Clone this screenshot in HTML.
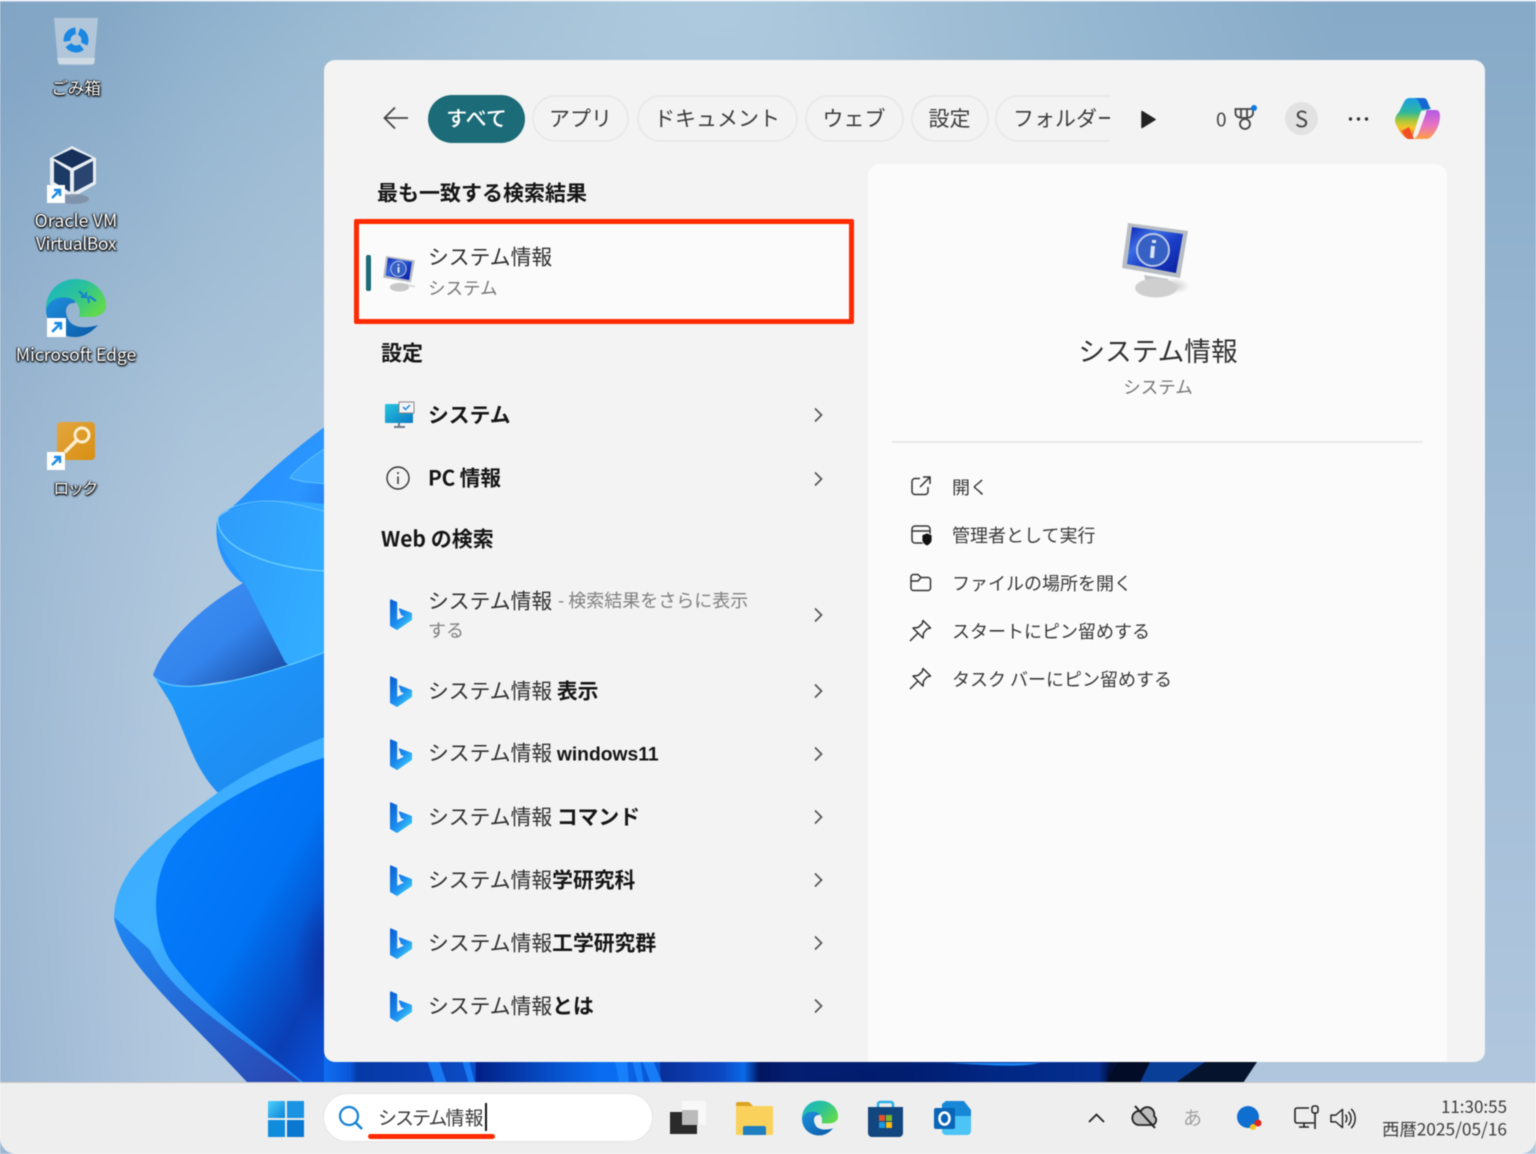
<!DOCTYPE html>
<html lang="ja"><head><meta charset="utf-8"><title>検索</title>
<style>
html,body{margin:0;padding:0;background:#fff}
#r{position:relative;width:1536px;height:1154px;overflow:hidden;filter:blur(.5px);font-family:"Liberation Sans","Noto Sans CJK JP",sans-serif;color:#222}
.a{position:absolute}
.t{position:absolute;white-space:nowrap;transform:translateY(-50%);line-height:1.2;font-family:"Noto Sans CJK JP","Liberation Sans",sans-serif;margin-top:-.5px}
.h{font-size:21px;font-weight:700;color:#151515;margin-top:.5px}
.n{font-size:20.8px;color:#2f2f2f}
.b{font-weight:700;color:#151515}
.s{font-size:17.5px;color:#777}
.c{position:absolute;top:95px;height:47px;box-sizing:border-box;border:2px solid #e9e9e9;border-radius:24px;font:21px/43px "Noto Sans CJK JP",sans-serif;text-align:center;color:#3c3c3c;white-space:nowrap}
.d{font-size:18px;color:#383838;margin-top:.5px}
.l{position:absolute;width:160px;text-align:center;color:#fff;font-size:17.5px;line-height:23px;text-shadow:0 0 2px #000,1px 1px 2px #000,0 1px 1px #000,-1px 0 1px rgba(0,0,0,.8);transform:translateX(-50%);font-family:"Noto Sans CJK JP","Liberation Sans",sans-serif}
svg{position:absolute;overflow:visible}
</style></head><body><div id="r">

<!-- wallpaper -->
<svg style="left:0;top:0" width="1536" height="1154" viewBox="0 0 1536 1154">
<defs>
<linearGradient id="bg" x1="0" y1="0" x2="0" y2="1"><stop offset="0" stop-color="#86aac8"/><stop offset=".45" stop-color="#9fbbd5"/><stop offset="1" stop-color="#b2c8df"/></linearGradient>
<linearGradient id="bg2" x1="0" y1="0" x2="1" y2="0"><stop offset="0" stop-color="#7f9fc2" stop-opacity=".45"/><stop offset=".13" stop-color="#7f9fc2" stop-opacity="0"/></linearGradient>
<radialGradient id="bg3" gradientUnits="userSpaceOnUse" cx="500" cy="620" r="720"><stop offset="0" stop-color="#d8e6ee" stop-opacity=".5"/><stop offset="1" stop-color="#d8e6ee" stop-opacity="0"/></radialGradient>
<radialGradient id="bg4" gradientUnits="userSpaceOnUse" cx="720" cy="-40" r="620"><stop offset="0" stop-color="#c4dcea" stop-opacity=".65"/><stop offset="1" stop-color="#c4dcea" stop-opacity="0"/></radialGradient>
<linearGradient id="p1" x1="0" y1="0" x2="1" y2="1"><stop offset="0" stop-color="#1f8fff"/><stop offset=".5" stop-color="#2c96ff"/><stop offset="1" stop-color="#1459d8"/></linearGradient>
<linearGradient id="p2" x1="0" y1="0" x2="1" y2=".9"><stop offset="0" stop-color="#3f90f5"/><stop offset=".55" stop-color="#3384ec"/><stop offset=".85" stop-color="#1f55b0"/><stop offset="1" stop-color="#1d4fa8"/></linearGradient>
<linearGradient id="p3" x1="0" y1="0" x2="1" y2="1"><stop offset="0" stop-color="#1f9cff"/><stop offset="1" stop-color="#1e86ec"/></linearGradient>
<linearGradient id="p4" x1="0" y1="0" x2="1" y2=".4"><stop offset="0" stop-color="#2e9bfb"/><stop offset="1" stop-color="#33adff"/></linearGradient>
<linearGradient id="p5" x1="0" y1="0" x2=".9" y2="1"><stop offset="0" stop-color="#0a80ff"/><stop offset=".55" stop-color="#0074f4"/><stop offset=".85" stop-color="#0a3eb5"/><stop offset="1" stop-color="#0a50d5"/></linearGradient>
<linearGradient id="p6" x1="0" y1="0" x2="1" y2="1"><stop offset="0" stop-color="#1f88f5"/><stop offset="1" stop-color="#2a45b0"/></linearGradient>
<linearGradient id="p7" x1="0" y1="0" x2=".6" y2="1"><stop offset="0" stop-color="#3aa9ff"/><stop offset=".5" stop-color="#3fb0ff"/><stop offset="1" stop-color="#1f88f5"/></linearGradient>
<radialGradient id="dk" cx=".5" cy=".5" r=".5"><stop offset="0" stop-color="#0a2f9e" stop-opacity=".95"/><stop offset="1" stop-color="#0a2f9e" stop-opacity="0"/></radialGradient>
<linearGradient id="st" gradientUnits="userSpaceOnUse" x1="324" y1="0" x2="1257" y2="0">
<stop offset="0" stop-color="#0f70f0"/>
<stop offset=".028" stop-color="#0a55d8"/>
<stop offset=".036" stop-color="#053aa5"/>
<stop offset=".103" stop-color="#0a3db0"/>
<stop offset=".162" stop-color="#0c4fc8"/>
<stop offset=".163" stop-color="#021f85"/>
<stop offset=".232" stop-color="#0648c0"/>
<stop offset=".296" stop-color="#0a6cf0"/>
<stop offset=".313" stop-color="#0a6cf0"/>
<stop offset=".36" stop-color="#0a4fc8"/>
<stop offset=".361" stop-color="#0a2f98"/>
<stop offset=".424" stop-color="#0d45c0"/>
<stop offset=".45" stop-color="#0a6ae8"/>
<stop offset=".467" stop-color="#02145f"/>
<stop offset=".5" stop-color="#041e70"/>
<stop offset=".62" stop-color="#021f70"/>
<stop offset=".72" stop-color="#0235a0"/>
<stop offset=".83" stop-color="#0a47b8"/>
<stop offset=".84" stop-color="#05103a"/>
<stop offset="1" stop-color="#08182e"/>
</linearGradient>
</defs>
<rect width="1536" height="1154" fill="url(#bg)"/>
<rect width="1536" height="1154" fill="url(#bg2)"/>
<rect width="1536" height="1154" fill="url(#bg3)"/>
<rect width="1536" height="1154" fill="url(#bg4)"/>
<rect width="1536" height="1.5" fill="#e8eef4"/>
<!-- back top petal -->
<path d="M330 423 C295 448 262 478 243 497 L217 521 C212 560 240 582 243 583 L330 670Z" fill="url(#p1)"/>
<path d="M330 445C310 458 295 470 290 478 C305 483 318 483 330 484Z" fill="#3ba6ff" stroke="#5cc0ff" stroke-width="1"/>
<!-- mid petal (behind cone) -->
<path d="M243 583C205 605 165 640 153 675 C165 690 175 690 200 685 L300 670 L300 600Z" fill="url(#p2)"/>
<!-- upper cone -->
<path d="M330 505C290 498 235 500 218 518 C212 535 228 560 243 580 L285 662 L296 672 L330 668Z" fill="url(#p4)"/>
<path d="M218 518C214 545 268 570 330 571" fill="none" stroke="#6fd2ff" stroke-width="1.300"/>
<path d="M218 518C228 503 262 498 290 503 C305 506 320 510 330 513" fill="none" stroke="#62c4ff" stroke-width="1"/>
<path d="M155 678C168 690 195 688 225 682 C260 675 300 665 330 650 L330 800 L220 795 C195 770 190 745 172 705Z" fill="url(#p3)"/>
<path d="M154 677C170 692 210 686 240 679 C275 671 305 660 330 650" fill="none" stroke="#5cc8ff" stroke-width="1.300"/>
<!-- big petal -->
<path d="M330 735C290 750 245 772 205 802 C160 835 115 870 114 917 C120 960 180 1010 247 1082 L330 1082Z" fill="url(#p7)"/>
<path d="M114 917C120 960 180 1010 247 1082 L300 1082 C240 1035 175 1000 150 950 Z" fill="url(#p6)"/>
<path d="M330 756C280 770 215 800 180 838 C150 870 150 925 170 960 C205 1010 260 1045 303 1082 L330 1082Z" fill="url(#p5)"/>
<ellipse cx="330" cy="960" rx="36" ry="70" fill="url(#dk)"/>
<!-- bottom strip -->
<path d="M324 1056H1257L1243 1083H324Z" fill="url(#st)"/>
<path d="M427 1060l8 24h12l-8-24zM462 1060l7 24h6l-6-24zM615 1060l4 24h10l-2-24zM632 1060l6 24h6l-4-24zM642 1060l9 24h12l-10-24z" fill="#1a86ff" opacity=".8"/>
<path d="M800 1083C850 1068 900 1063 960 1064 C1020 1064 1060 1062 1110 1062 L1105 1083Z" fill="#021c6e" opacity=".55"/>
<path d="M950 1063 C1000 1066 1020 1067 1040 1063Z" fill="#1a85f5"/>
<path d="M1118 1062H1150L1138 1083H1106Z" fill="#020c26"/>
<path d="M1150 1062H1205L1175 1083H1140Z" fill="#0a3f98"/>
<path d="M1205 1062H1257L1243 1083H1178Z" fill="#05132c"/>
</svg>

<!-- recycle bin -->
<svg style="left:54px;top:16px" width="44" height="50" viewBox="0 0 44 50">
<path d="M0 2h44l-4 44a3 3 0 0 1-3 3H7a3 3 0 0 1-3-3z" fill="#b9cddc" opacity=".85"/>
<path d="M3 42h38l-1 6H5z" fill="#cfdbe4"/>
<circle cx="22" cy="24" r="9" fill="none" stroke="#1a87e3" stroke-width="7" stroke-dasharray="15 3.850" transform="rotate(-70 22 24)"/>
</svg>
<div class="l" style="left:76px;top:76px;font-size:16.500px">ごみ箱</div>

<!-- VirtualBox -->
<svg style="left:47px;top:146px" width="52" height="60" viewBox="0 0 52 60">
<path d="M25 0L49 12V38L25 52 3 38V12Z" fill="#e8edf2"/>
<path d="M25 3L45 12 25 22 6 12Z" fill="#15305a"/>
<path d="M7 15L23 25V46L7 36Z" fill="#1c3a66"/>
<path d="M27 25L46 15V36L27 46Z" fill="#2a4670"/>
<ellipse cx="27" cy="53" rx="15" ry="5" fill="#7d8ea5" opacity=".85"/>
</svg>
<div class="a" style="left:47px;top:185px;width:18px;height:18px;background:#fff"></div>
<svg style="left:50px;top:188px" width="12" height="12" viewBox="0 0 12 12"><path d="M2 10L9 3M4 2h6v6" stroke="#1a8ae5" stroke-width="2.400" fill="none"/></svg>
<div class="l" style="left:76px;top:209px"><span style="letter-spacing:.2px">Oracle VM</span><br><span style="letter-spacing:-.4px">VirtualBox</span></div>

<!-- Edge desktop -->
<svg style="left:46px;top:279px" width="60" height="58" viewBox="0 0 60 58">
<defs><linearGradient id="e1" x1="0" y1="0" x2="1" y2=".6"><stop offset="0" stop-color="#19b4c9"/><stop offset=".55" stop-color="#2bc29a"/><stop offset="1" stop-color="#5fd94f"/></linearGradient><linearGradient id="e2" x1="0" y1="0" x2="1" y2="1"><stop offset="0" stop-color="#1f8fde"/><stop offset="1" stop-color="#0a5aa6"/></linearGradient></defs>
<path d="M0 30C0 12 13 0 30 0 48 0 60 13 60 26 60 35 52 38 44 38H33C35 30 32 22 24 20 14 18 4 22 0 30Z" fill="url(#e1)"/>
<path d="M0 30C4 20 14 17 23 19 29 21 31 24 28 24 20 24 18 32 22 40 26 49 39 50 52 46 45 54 37 58 29 58 12 58 0 46 0 30Z" fill="url(#e2)"/>
<path d="M33 12l6 6M35 18h5v-5M50 22l-7-5M42 18l1 6" stroke="#157fd2" stroke-width="2" fill="none"/>
</svg>
<div class="a" style="left:47px;top:318px;width:19px;height:19px;background:#fff"></div>
<svg style="left:50px;top:321px" width="13" height="13" viewBox="0 0 12 12"><path d="M2 10L9 3M4 2h6v6" stroke="#1a8ae5" stroke-width="2.400" fill="none"/></svg>
<div class="l" style="left:76px;top:343px">Microsoft Edge</div>

<!-- Lock -->
<svg style="left:57px;top:422px" width="38" height="39" viewBox="0 0 38 39">
<defs><linearGradient id="k1" x1="0" y1="0" x2="1" y2="1"><stop offset="0" stop-color="#e3a640"/><stop offset="1" stop-color="#d98f10"/></linearGradient></defs>
<rect width="38" height="38" rx="4" fill="url(#k1)"/>
<circle cx="25" cy="13" r="7" fill="none" stroke="#fdeed0" stroke-width="3"/>
<path d="M20 18L8 30" stroke="#fdeed0" stroke-width="3.500"/>
</svg>
<div class="a" style="left:47px;top:452px;width:18px;height:18px;background:#fff"></div>
<svg style="left:50px;top:455px" width="12" height="12" viewBox="0 0 12 12"><path d="M2 10L9 3M4 2h6v6" stroke="#1a8ae5" stroke-width="2.400" fill="none"/></svg>
<div class="l" style="left:75px;top:476px;font-size:16px;letter-spacing:-1.500px">ロック</div>

<!-- panel -->
<div class="a" style="left:324px;top:60px;width:1161px;height:1002px;background:#f3f3f3;border-radius:11px"></div>
<div class="a" style="left:868px;top:164px;width:579px;height:898px;background:#fbfbfb;border-radius:12px 12px 0 0"></div>

<!-- top bar -->
<svg style="left:383px;top:106px" width="26" height="24" viewBox="0 0 26 24"><path d="M25 12H2M12 1.500L1.500 12 12 22.500" fill="none" stroke="#444" stroke-width="1.800"/></svg>
<div class="c" style="left:428px;top:94.500px;width:97px;height:48px;background:#1c6b78;border:0;color:#fff;line-height:47px;font-weight:500">すべて</div>
<div class="c" style="left:532px;width:97px">アプリ</div>
<div class="c" style="left:636.500px;width:161px">ドキュメント</div>
<div class="c" style="left:804.500px;width:99px">ウェブ</div>
<div class="c" style="left:910.500px;width:78px">設定</div>
<div class="a" style="left:995px;top:95px;width:115px;height:47px;overflow:hidden"><div class="c" style="left:0;top:0;width:150px;text-align:left;padding-left:16px">フォルダー</div></div>
<svg style="left:1141px;top:110px" width="15" height="19" viewBox="0 0 15 19"><path d="M1 1.500L14 9.500 1 17.500Z" fill="#222" stroke="#222" stroke-linejoin="round" stroke-width="1.500"/></svg>
<div class="t" style="left:1216px;top:120px;font-size:19px;color:#444">0</div>
<svg style="left:1234px;top:105px" width="24" height="26" viewBox="0 0 24 26"><path d="M1.500 4H19V8C19 12 15 13 10 13 5 13 1.500 12 1.500 8ZM7 4V12M13 4V12" fill="none" stroke="#444" stroke-width="1.800"/><circle cx="11" cy="19" r="5" fill="none" stroke="#444" stroke-width="1.800"/><circle cx="20" cy="3" r="3" fill="#0f7ae5"/></svg>
<div class="a" style="left:1285px;top:102px;width:33px;height:33px;border-radius:50%;background:#e2e2e2;font:22px/33px 'Noto Sans CJK JP',sans-serif;text-align:center;color:#444">S</div>
<svg style="left:1348px;top:116px" width="21" height="6" viewBox="0 0 21 6"><circle cx="2.500" cy="3" r="1.700" fill="#333"/><circle cx="10.500" cy="3" r="1.700" fill="#333"/><circle cx="18.500" cy="3" r="1.700" fill="#333"/></svg>
<!-- copilot -->
<svg style="left:1395px;top:97px" width="46" height="44" viewBox="0 0 46 44">
<defs>
<linearGradient id="c1" x1=".4" y1="0" x2=".4" y2="1"><stop offset="0" stop-color="#1b9fe8"/><stop offset=".35" stop-color="#2fb89a"/><stop offset=".55" stop-color="#a8c83a"/><stop offset=".72" stop-color="#f5c62a"/><stop offset="1" stop-color="#f2552a"/></linearGradient>
<linearGradient id="c2" x1=".5" y1="0" x2=".5" y2="1"><stop offset="0" stop-color="#b25ae6"/><stop offset=".55" stop-color="#ea74c0"/><stop offset="1" stop-color="#ffa040"/></linearGradient>
</defs>
<path d="M14 1H28C31 1 32 3 33 6L36 12 26 14 18 38C17 41 15 42 13 42 8 40 1 30 0 24 0 20 2 17 4 15L9 5C10 3 12 1 14 1Z" fill="url(#c1)"/>
<path d="M20 1H28C31 1 32 3 33 6L35 12H27L24 5C23 3 22 2 20 1Z" fill="#1467d4"/>
<path d="M32 13H41C44 13 45 16 45 19 45 26 42 34 36 40 34 42 32 42 30 42H18C21 41 23 38 24 35L31 16C31 15 31 14 32 13Z" fill="url(#c2)"/>
<path d="M14 30L19 42H14C11 42 9 37 7 34Z" fill="#f04e23"/>
</svg>

<!-- left column -->
<div class="t h" style="left:377px;top:192px">最も一致する検索結果</div>
<div class="a" style="left:359px;top:224px;width:491px;height:96px;background:#fbfbfb"></div>
<div class="a" style="left:366px;top:255px;width:5px;height:36px;background:#1c6b78;border-radius:2px"></div>
<svg style="left:383px;top:256px" width="32" height="36" viewBox="0 0 66 75">
<defs><linearGradient id="m1" x1="0" y1="0" x2="1" y2="1"><stop offset="0" stop-color="#0a24b0"/><stop offset=".35" stop-color="#3a6ae0"/><stop offset=".6" stop-color="#1a3ec4"/><stop offset="1" stop-color="#081c9c"/></linearGradient></defs>
<path d="M6 0L66 9 58 55 0 45Z" fill="#b8bcc2"/><path d="M10 4L60 12 54 50 5 41Z" fill="url(#m1)"/>
<circle cx="32" cy="27" r="16" fill="#3660c4" stroke="#b9c6e6" stroke-width="2"/><path d="M32 17v3M32 23v12" stroke="#dbe3f5" stroke-width="4"/>
<ellipse cx="34" cy="65" rx="20" ry="9" fill="#c8c8c8"/><path d="M48 60L66 64" stroke="#bbb" stroke-width="4" opacity=".5"/>
</svg>
<div class="t n" style="left:428px;top:256px">システム情報</div>
<div class="t s" style="left:428px;top:288px">システム</div>
<!-- red box -->
<div class="a" style="left:354px;top:219px;width:500px;height:105px;box-sizing:border-box;border:5px solid #ff2a00;border-radius:2px"></div>

<div class="t h" style="left:381px;top:352px">設定</div>
<svg style="left:385px;top:402px" width="30" height="27" viewBox="0 0 30 27">
<defs><linearGradient id="sy" x1="0" y1="0" x2="1" y2="1"><stop offset="0" stop-color="#27c6e0"/><stop offset="1" stop-color="#0a78c2"/></linearGradient></defs>
<rect x="0" y="2" width="28" height="19" rx="1" fill="url(#sy)"/><rect x="14" y="0" width="15" height="11" fill="#f4f4f4" stroke="#888" stroke-width="1"/><path d="M18 5l2.500 2.500L25 3" stroke="#1a8ae5" stroke-width="1.500" fill="none"/><path d="M9 25h11M14 21v4" stroke="#6b7a88" stroke-width="2"/></svg>
<div class="t n b" style="left:428px;top:414px">システム</div>
<svg style="left:386px;top:466px" width="24" height="24" viewBox="0 0 24 24"><circle cx="12" cy="12" r="11" fill="none" stroke="#333" stroke-width="1.400"/><path d="M12 10.500v7.500" stroke="#333" stroke-width="1.500"/><circle cx="12" cy="7" r="1" fill="#333"/></svg>
<div class="t n b" style="left:428px;top:477px;letter-spacing:-.2px">PC 情報</div>
<div class="t h" style="left:381px;top:538px">Web の検索</div>

<svg width="0" height="0" style="position:absolute"><defs>
<linearGradient id="bi" x1=".1" y1="0" x2=".9" y2="1"><stop offset="0" stop-color="#0b64d4"/><stop offset=".55" stop-color="#1b8cf0"/><stop offset="1" stop-color="#45d6f4"/></linearGradient>
<symbol id="bing" viewBox="0 0 22 31"><path d="M.7 1L6.500 3.500V22L15.500 17.500 11.500 15.500 9.500 10 21.300 14.500V20.500L7 30.300 .7 26.500Z" fill="url(#bi)" stroke="url(#bi)" stroke-width="1.400" stroke-linejoin="round"/></symbol>
<symbol id="chev" viewBox="0 0 10 16"><path d="M2 1.500L8.500 8 2 14.500" fill="none" stroke="#555" stroke-width="1.700"/></symbol>
</defs></svg>

<svg style="left:390px;top:599px" width="22" height="31"><use href="#bing"/></svg>
<div class="t n" style="left:428px;top:600px">システム情報</div>
<div class="t" style="left:558px;top:601.500px;font-size:18px;color:#808080">- 検索結果をさらに表示</div>
<div class="t" style="left:428px;top:631.500px;font-size:18px;color:#808080">する</div>

<svg style="left:390px;top:676px" width="22" height="31"><use href="#bing"/></svg>
<div class="t n" style="left:428px;top:690px">システム情報 <span class="b">表示</span></div>
<svg style="left:390px;top:739px" width="22" height="31"><use href="#bing"/></svg>
<div class="t n" style="left:428px;top:753px">システム情報 <span class="b" style="font:700 19.300px 'Liberation Sans',sans-serif">windows11</span></div>
<svg style="left:390px;top:802px" width="22" height="31"><use href="#bing"/></svg>
<div class="t n" style="left:428px;top:816px">システム情報 <span class="b">コマンド</span></div>
<svg style="left:390px;top:865px" width="22" height="31"><use href="#bing"/></svg>
<div class="t n" style="left:428px;top:879px">システム情報<span class="b">学研究科</span></div>
<svg style="left:390px;top:928px" width="22" height="31"><use href="#bing"/></svg>
<div class="t n" style="left:428px;top:942px">システム情報<span class="b">工学研究群</span></div>
<svg style="left:390px;top:991px" width="22" height="31"><use href="#bing"/></svg>
<div class="t n" style="left:428px;top:1005px">システム情報<span class="b">とは</span></div>

<svg style="left:813px;top:407px" width="10" height="16"><use href="#chev"/></svg>
<svg style="left:813px;top:471px" width="10" height="16"><use href="#chev"/></svg>
<svg style="left:813px;top:607px" width="10" height="16"><use href="#chev"/></svg>
<svg style="left:813px;top:683px" width="10" height="16"><use href="#chev"/></svg>
<svg style="left:813px;top:746px" width="10" height="16"><use href="#chev"/></svg>
<svg style="left:813px;top:809px" width="10" height="16"><use href="#chev"/></svg>
<svg style="left:813px;top:872px" width="10" height="16"><use href="#chev"/></svg>
<svg style="left:813px;top:935px" width="10" height="16"><use href="#chev"/></svg>
<svg style="left:813px;top:998px" width="10" height="16"><use href="#chev"/></svg>

<!-- detail -->
<svg style="left:1122px;top:223px" width="66" height="75" viewBox="0 0 66 75">
<defs><linearGradient id="m2" x1="0" y1="0" x2="1" y2="1"><stop offset="0" stop-color="#0a20b0"/><stop offset=".3" stop-color="#3c6ee4"/><stop offset=".55" stop-color="#1c40c8"/><stop offset="1" stop-color="#081c9c"/></linearGradient>
<radialGradient id="sh" cx=".5" cy=".5" r=".5"><stop offset="0" stop-color="#999" stop-opacity=".5"/><stop offset="1" stop-color="#999" stop-opacity="0"/></radialGradient></defs>
<ellipse cx="52" cy="63" rx="16" ry="8" fill="url(#sh)"/>
<path d="M6 0L66 8 58 55 0 45Z" fill="#b8bdc4"/><path d="M10 4L61 11 54 50 5 41Z" fill="url(#m2)"/>
<circle cx="31" cy="27" r="16" fill="#3660c4" stroke="#b9c6e6" stroke-width="2"/><path d="M32 17v3M31 23l-1 12" stroke="#dbe3f5" stroke-width="4"/>
<path d="M22 52L46 56 46 62 24 60Z" fill="#bfc3c8"/><ellipse cx="34" cy="65" rx="21" ry="9.500" fill="#cfcfcf"/>
</svg>
<div class="t" style="left:1158px;top:350px;font-size:26.700px;color:#2f2f2f;transform:translate(-50%,-50%)">システム情報</div>
<div class="t s" style="left:1158px;top:387px;transform:translate(-50%,-50%)">システム</div>
<div class="a" style="left:892px;top:441px;width:531px;height:2px;background:#e8e8e8"></div>

<svg style="left:911px;top:476px" width="20" height="20" viewBox="0 0 20 20"><path d="M9 2.500H4A3 3 0 0 0 1 5.500V15.500A3 3 0 0 0 4 18.500H14A3 3 0 0 0 17 15.500V11M9 11L18.500 1.500M12 1H19V8" fill="none" stroke="#333" stroke-width="1.500"/></svg>
<div class="t d" style="left:952px;top:487px">開く</div>
<svg style="left:911px;top:525px" width="22" height="21" viewBox="0 0 22 21"><rect x="1" y="1" width="18" height="17" rx="3" fill="none" stroke="#333" stroke-width="1.500"/><path d="M1 6H19" stroke="#333" stroke-width="1.500"/><path d="M11 10l5-2 5 2v5c0 3-3 5-5 6-2-1-5-3-5-6z" fill="#111" stroke="#fbfbfb" stroke-width=".8"/></svg>
<div class="t d" style="left:952px;top:535px">管理者として実行</div>
<svg style="left:910px;top:573px" width="22" height="19" viewBox="0 0 22 19"><path d="M1 4A2.500 2.500 0 0 1 3.500 1.500H8L11 4.500H18A2.500 2.500 0 0 1 20.500 7V15A2.500 2.500 0 0 1 18 17.500H3.500A2.500 2.500 0 0 1 1 15ZM1 8H8L11 4.500" fill="none" stroke="#333" stroke-width="1.500"/></svg>
<div class="t d" style="left:952px;top:583px">ファイルの場所を開く</div>
<svg style="left:909px;top:619px" width="23" height="23" viewBox="0 0 23 23"><path d="M14 1.500L21.500 9 18 10 14.500 14 14 19 4 9 9 8.500 13 5ZM8.500 14.500L1 22" fill="none" stroke="#333" stroke-width="1.500" stroke-linejoin="round"/></svg>
<div class="t d" style="left:952px;top:631px">スタートにピン留めする</div>
<svg style="left:909px;top:667px" width="23" height="23" viewBox="0 0 23 23"><path d="M14 1.500L21.500 9 18 10 14.500 14 14 19 4 9 9 8.500 13 5ZM8.500 14.500L1 22" fill="none" stroke="#333" stroke-width="1.500" stroke-linejoin="round"/></svg>
<div class="t d" style="left:952px;top:679px">タスク バーにピン留めする</div>

<!-- taskbar -->
<div class="a" style="left:0;top:1082px;width:1536px;height:72px;background:#eeeeee;border-top:1px solid #c9c9c9;box-sizing:border-box;border-radius:0 0 16px 16px"></div>
<svg style="left:268px;top:1101px" width="36" height="36" viewBox="0 0 36 36">
<defs><linearGradient id="w1" x1="0" y1="0" x2="1" y2="1"><stop offset="0" stop-color="#4dd0fb"/><stop offset="1" stop-color="#0b84d8"/></linearGradient></defs>
<rect x="0" y="0" width="17" height="17" fill="url(#w1)"/><rect x="19" y="0" width="17" height="17" fill="#1a93e2"/><rect x="0" y="19" width="17" height="17" fill="#0f8cdc"/><rect x="19" y="19" width="17" height="17" fill="#0a78d0"/></svg>
<div class="a" style="left:324px;top:1094px;width:328px;height:47px;background:#fff;border-radius:24px;box-shadow:0 0 0 1px #e4e4e4"></div>
<svg style="left:338px;top:1105px" width="26" height="26" viewBox="0 0 26 26"><circle cx="11" cy="11" r="9" fill="none" stroke="#1480d4" stroke-width="2.200"/><path d="M17.500 17.500L24 24" stroke="#1480d4" stroke-width="2.500"/></svg>
<div class="t" style="left:378px;top:1118px;font-size:19px;color:#3a3a3a"><span style="letter-spacing:-2px">システム</span>情報</div>
<div class="a" style="left:485px;top:1103px;width:2px;height:28px;background:#111"></div>
<div class="a" style="left:368px;top:1134px;width:127px;height:5px;background:#ff2a00;border-radius:3px"></div>

<svg style="left:670px;top:1101px" width="36" height="36" viewBox="0 0 36 36"><rect x="12" y="0" width="24" height="24" fill="#f8f8f8"/><rect x="12" y="9" width="16" height="15" fill="#bbb"/><path d="M0 11H12V24H27V33H0Z" fill="#2a2a2a"/></svg>
<svg style="left:736px;top:1101px" width="37" height="34" viewBox="0 0 37 34"><path d="M0 3A2 2 0 0 1 2 1H13L17 5H0Z" fill="#dca320"/><rect y="5" width="37" height="29" rx="1.500" fill="#fad15a"/><path d="M7 34V27A2 2 0 0 1 9 25H28A2 2 0 0 1 30 27V34Z" fill="#1d7fbf"/></svg>
<svg style="left:802px;top:1100px" width="36" height="36" viewBox="0 0 60 58"><path d="M0 30C0 12 13 0 30 0 48 0 60 13 60 26 60 35 52 38 44 38H33C35 30 32 22 24 20 14 18 4 22 0 30Z" fill="url(#e1)"/><path d="M0 30C4 20 14 17 23 19 29 21 31 24 28 24 20 24 18 32 22 40 26 49 39 50 52 46 45 54 37 58 29 58 12 58 0 46 0 30Z" fill="url(#e2)"/></svg>
<svg style="left:868px;top:1100px" width="35" height="37" viewBox="0 0 35 37"><path d="M10 8V4A2 2 0 0 1 12 2H23A2 2 0 0 1 25 4V8" fill="none" stroke="#2ab0ea" stroke-width="2.500"/><path d="M0 7H35V33A4 4 0 0 1 31 37H4A4 4 0 0 1 0 33Z" fill="#12467e"/><rect x="11" y="15" width="6" height="6" fill="#e8502a"/><rect x="18" y="15" width="6" height="6" fill="#7cb82a"/><rect x="11" y="22" width="6" height="6" fill="#1c9ae0"/><rect x="18" y="22" width="6" height="6" fill="#fbbc14"/></svg>
<svg style="left:934px;top:1101px" width="37" height="34" viewBox="0 0 37 34"><path d="M12 0H30L37 9V15H8V3Z" fill="#1787d8"/><path d="M8 15H37V30A4 4 0 0 1 33 34H12A4 4 0 0 1 8 30Z" fill="#4cc4f5"/><rect x="0" y="7" width="21" height="21" rx="2" fill="#0a64b8"/><ellipse cx="10.500" cy="17.500" rx="5" ry="6" fill="none" stroke="#fff" stroke-width="2.600"/></svg>

<svg style="left:1088px;top:1113px" width="17" height="10" viewBox="0 0 17 10"><path d="M1 9L8.500 1.500 16 9" fill="none" stroke="#222" stroke-width="1.800"/></svg>
<svg style="left:1132px;top:1105px" width="26" height="24" viewBox="0 0 26 24"><path d="M6 20H20A5 5 0 0 0 22 11 7 7 0 0 0 9 6 6 6 0 0 0 6 20Z" fill="#bdbdbd" stroke="#222" stroke-width="1.800"/><path d="M3 1L23 23" stroke="#222" stroke-width="2"/></svg>
<div class="t" style="left:1183px;top:1118px;font-size:19px;color:#a0a0a0">あ</div>
<svg style="left:1237px;top:1106px" width="25" height="26" viewBox="0 0 25 26"><circle cx="11" cy="11" r="11" fill="#0f6fd0"/><circle cx="21" cy="17" r="3.500" fill="#e2241c"/><circle cx="16" cy="21" r="3" fill="#f8c21c"/></svg>
<svg style="left:1294px;top:1105px" width="25" height="25" viewBox="0 0 25 25"><path d="M15 3H3A2 2 0 0 0 1 5V16A2 2 0 0 0 3 18H20M10 18V22M5 22H15M21 8V24" fill="none" stroke="#222" stroke-width="1.600"/><rect x="18" y="1" width="6" height="7" rx="2" fill="none" stroke="#222" stroke-width="1.500"/></svg>
<svg style="left:1330px;top:1107px" width="25" height="23" viewBox="0 0 26 23"><path d="M1 8H6L13 2V21L6 15H1Z" fill="none" stroke="#222" stroke-width="1.500" stroke-linejoin="round"/><path d="M16 7.500A6 6 0 0 1 16 15.500M19 4.500A10 10 0 0 1 19 18.500M22 1.500A14 14 0 0 1 22 21.500" fill="none" stroke="#222" stroke-width="1.500"/></svg>
<div class="t" style="right:29px;top:1106.500px;font-size:17px;color:#3c3c3c">11:30:55</div>
<div class="t" style="right:29px;top:1129.500px;font-size:17.300px;color:#3c3c3c">西暦2025/05/16</div>
</div></body></html>
